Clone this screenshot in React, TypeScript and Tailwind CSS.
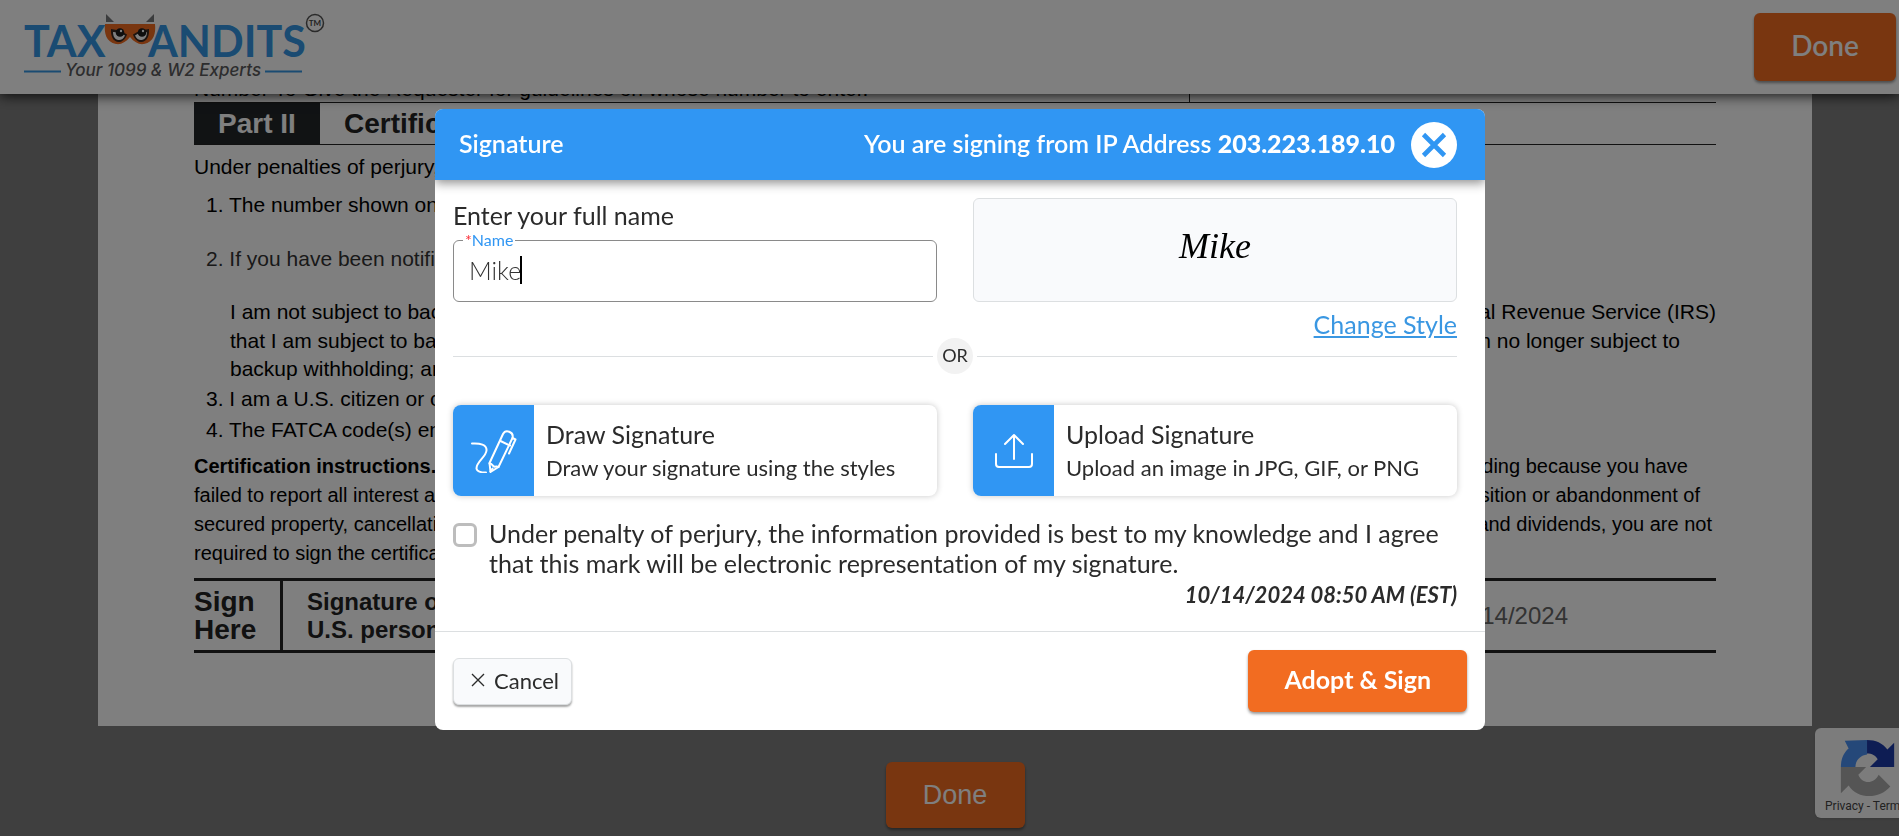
import { useState } from 'react';
import type { ReactNode } from 'react';

function Logo() {
  return (
    <svg viewBox="0 0 310 72" className="h-[72px] w-[310px]" role="img" aria-label="TaxBandits">
      <g fill="#3496e4" fontFamily="Lato, sans-serif" fontWeight="700" fontSize="43">
        <text x="2" y="46">TAX</text>
        <text x="126" y="46">ANDITS</text>
      </g>
      {/* bandit mask */}
      <path d="M84 11V3l8 8zM132 11V3l-8 8z" fill="#77787b" />
      <path
        d="M83 13h50c1 9-1 18-11 20-5 .8-9.500-1.500-14-7-4.500 5.500-9 7.800-14 7-10-2-12-11-11-20z"
        fill="#f26c21"
      />
      <path d="M89 18c6 .5 12 2.500 16 5.500-2 6-6 8-9 7.500-5-.8-7.500-6-7-13zM127 18c-6 .5-12 2.500-16 5.500 2 6 6 8 9 7.500 5-.8 7.500-6 7-13z" fill="#3a2a22" />
      <path d="M91 21c5 0 9 1.500 12 3.500-1.500 3.500-4 4.800-6.500 4.500-3.500-.5-5.500-3.500-5.500-8zM125 21c-5 0-9 1.500-12 3.500 1.500 3.500 4 4.800 6.500 4.500 3.500-.5 5.500-3.500 5.500-8z" fill="#fff" />
      <circle cx="98" cy="21.500" r="4.300" fill="#1c1c1c" />
      <circle cx="120" cy="21.500" r="4.300" fill="#1c1c1c" />
      <circle cx="99" cy="20" r="1.200" fill="#fff" />
      <circle cx="121" cy="20" r="1.200" fill="#fff" />
      <circle cx="293" cy="12" r="8.500" fill="none" stroke="#555" strokeWidth="1.500" />
      <text x="293" y="15" textAnchor="middle" fontFamily="Lato, sans-serif" fontWeight="700" fontSize="8" fill="#444">
        TM
      </text>
      <path d="M2 60.500h37M243 60.500h37" stroke="#3496e4" strokeWidth="2" />
      <text
        x="141"
        y="65"
        textAnchor="middle"
        fontFamily="Inter, sans-serif"
        fontStyle="italic"
        fontWeight="500"
        fontSize="17"
        fill="#5a5a5c"
      >
        Your 1099 &amp; W2 Experts
      </text>
    </svg>
  );
}

function PenIcon() {
  return (
    <svg viewBox="0 0 46 44" className="h-11 w-[46px]" fill="none" stroke="#fff" strokeWidth="2" strokeLinecap="round" strokeLinejoin="round">
      <path d="M1 14.500c8-.5 15 1 14.500 7C15 28 5 33 5.500 39.500c.3 3.500 6 4 9.500 4" />
      <path d="M19.500 43l-1-9L32 5c2.500-5 11-2.500 9.500 4L27.500 38z" />
      <path d="M18.500 34.500c3 0 3 2.500 4.500 3 1.500.5 3-.5 4.500.5M29.500 12l9.500 4.500M41.500 9l3 1.500-6.500 14M19.500 42.500l2-3" />
    </svg>
  );
}

function UploadIcon() {
  return (
    <svg viewBox="0 0 40 36" className="h-9 w-10" fill="none" stroke="#fff" strokeWidth="2" strokeLinecap="round" strokeLinejoin="round">
      <path d="M2 21v10c0 2 1 3 3 3h30c2 0 3-1 3-3V21" />
      <path d="M20 26V2M11 11l9-9 9 9" />
    </svg>
  );
}

function CloseIcon({ className, width }: { className: string; width: number }) {
  return (
    <svg viewBox="0 0 24 24" className={className} fill="none" stroke="currentColor" strokeWidth={width}>
      <path d="M3 3l18 18M21 3L3 21" />
    </svg>
  );
}

function RecaptchaBadge() {
  return (
    <div className="absolute left-[1815px] top-[728px] flex h-[90px] w-64 flex-col rounded-md bg-[#f9f9f9] pt-2 shadow-sm">
      <svg viewBox="0 0 64 64" className="ml-[22px] h-[62px] w-[62px]">
        <path d="M31 4v15c-7 1-12 6-12 13H4C4 24 7 17 12 13L8 5z" fill="#4a90f2" />
        <path d="M31 4c9 0 16 3 21 10l7-7v25H34l8-8c-2-4-6-6-11-6z" fill="#1c3aa9" />
        <path d="M4 32h26l-8 8c4 10 16 10 21 0l12 12C43 66 21 65 12 51l-8 8z" fill="#ababab" />
      </svg>
      <p className="ml-[10px] font-['Roboto'] text-xs leading-4 text-[#444]">Privacy - Terms</p>
    </div>
  );
}

function SplitLine({ left, right, className = '' }: { left: ReactNode; right?: string; className?: string }) {
  return (
    <p className={`flex justify-between whitespace-nowrap ${className}`}>
      <span>{left}</span>
      <span>{right}</span>
    </p>
  );
}

function FormPage() {
  return (
    <section className="h-[632px] overflow-hidden bg-white px-24 font-['Liberation_Sans',sans-serif] text-[21px] leading-7 text-black">
      <div className="-mt-5 flex h-[29px] border-b border-[#222]">
        <p className="w-[996px] border-r border-[#222] leading-[30px]">
          Number To Give the Requester for guidelines on whose number to enter.
        </p>
      </div>
      <div className="flex h-[42px] items-center border-b border-[#222] text-[28px] font-bold">
        <h2 className="flex h-full w-[126px] items-center justify-center bg-[#222629] text-white">Part II</h2>
        <h2 className="ml-6 text-[#222]">Certification</h2>
      </div>
      <p className="mt-2">Under penalties of perjury, I certify that:</p>
      <ol className="pl-9">
        <li className="mt-[10px]">
          <span className="-ml-6">1. </span>The number shown on this form is my correct taxpayer identification number
        </li>
        <li className="mt-[26px] text-[#333]">
          <span className="-ml-6">2. </span>If you have been notified by the IRS
        </li>
        <li className="mt-[25px] list-none">
          <SplitLine left="I am not subject to backup withholding because" right="the Internal Revenue Service (IRS)" />
          <SplitLine left="that I am subject to backup withholding" right="I am no longer subject to" className="mt-px pr-9" />
          <SplitLine left="backup withholding; and" />
        </li>
        <li className="mt-[2px]">
          <span className="-ml-6">3. </span>I am a U.S. citizen or other U.S. person; and
        </li>
        <li className="mt-[3px]">
          <span className="-ml-6">4. </span>The FATCA code(s) entered on this form
        </li>
      </ol>
      <div className="mt-2 text-xl leading-[29px]">
        <SplitLine left={<b>Certification instructions.</b>} right="backup withholding because you have" className="pr-7" />
        <SplitLine left="failed to report all interest and dividends" right="paid, acquisition or abandonment of" className="pr-4" />
        <SplitLine left="secured property, cancellation of debt" right="interest and dividends, you are not" className="pr-1" />
        <SplitLine left="required to sign the certification" />
      </div>
      <div className="mt-[10px] flex h-[75px] items-center border-y-[3px] border-[#222] font-bold leading-7 text-[#222]">
        <p className="flex h-full w-[89px] items-center border-r-[3px] border-[#222] text-[28px] leading-7">
          Sign
          <br />
          Here
        </p>
        <p className="ml-6 text-2xl leading-7">
          Signature of
          <br />
          U.S. person
        </p>
        <p className="ml-auto mr-[148px] text-2xl font-normal text-[#666]">10/14/2024</p>
      </div>
    </section>
  );
}

interface OptionCardProps {
  icon: ReactNode;
  title: string;
  detail: string;
}

function OptionCard({ icon, title, detail }: OptionCardProps) {
  return (
    <button type="button" className="flex h-[91px] overflow-hidden rounded-lg bg-white text-left shadow-[0_0_6px_rgba(0,0,0,0.22)]">
      <span className="flex h-full w-[81px] shrink-0 items-center justify-center bg-[#3096f3]">{icon}</span>
      <span className="flex h-full flex-col justify-center pl-3">
        <span className="text-[25px] leading-[34px]">{title}</span>
        <span className="whitespace-nowrap text-[22px] leading-[34px]">{detail}</span>
      </span>
    </button>
  );
}

function SignatureModal() {
  const [name, setName] = useState('Mike');

  return (
    <div
      role="dialog"
      aria-label="Signature"
      className="w-[1050px] overflow-hidden rounded-lg bg-white font-['Lato',sans-serif] text-[25px] text-[#2b2b2b] [font-variant-ligatures:none]"
    >
      <header className="flex h-[71px] items-center bg-[#3096f3] pl-6 pr-7 font-semibold text-white shadow-[0_3px_10px_rgba(0,0,0,0.45)]">
        <h1 className="pb-0.5">Signature</h1>
        <p className="ml-auto pb-0.5">
          You are signing from IP Address <b className="font-black">203.223.189.10</b>
        </p>
        <button type="button" aria-label="Close" className="ml-4 flex size-[46px] items-center justify-center rounded-full bg-white text-[#3096f3]">
          <CloseIcon className="size-7" width={4} />
        </button>
      </header>

      <div className="pb-[21px] pl-[18px] pr-7 pt-[18px]">
        <div className="grid grid-cols-2 gap-x-9">
          <div>
            <p className="leading-[34px]">Enter your full name</p>
            <div className="relative mt-2">
              <input
                id="name"
                value={name}
                onChange={(e) => setName(e.target.value)}
                className="block h-[62px] w-full rounded-md border border-[#8a8a8a] px-[15px] pb-0.5 font-light text-[#333] outline-none"
              />
              <label htmlFor="name" className="absolute -top-2 left-[10px] bg-white px-0.5 text-base leading-4 text-[#3096f3]">
                <span className="text-red-500">*</span>Name
              </label>
              <span className="absolute left-[67px] top-4 h-7 w-0.5 bg-black" />
            </div>
          </div>
          <div>
            <div className="flex h-[104px] items-center justify-center rounded-md border border-[#dcdfe1] bg-[#f9fafc] pb-2 font-['Liberation_Serif',serif] text-4xl italic text-black">
              {name}
            </div>
            <p className="mt-2 text-right leading-7">
              <a href="#style" className="text-[#3a97e2] underline">
                Change Style
              </a>
            </p>
          </div>
        </div>

        <div className="flex items-center gap-1">
          <span className="h-px flex-1 bg-[#dcdfe1]" />
          <span className="flex size-9 items-center justify-center rounded-full bg-[#f2f2f2] pb-0.5 text-lg">OR</span>
          <span className="h-px flex-1 bg-[#dcdfe1]" />
        </div>

        <div className="mt-[31px] grid grid-cols-2 gap-x-9">
          <OptionCard icon={<PenIcon />} title="Draw Signature" detail="Draw your signature using the styles" />
          <OptionCard icon={<UploadIcon />} title="Upload Signature" detail="Upload an image in JPG, GIF, or PNG" />
        </div>

        <div className="mt-[22px] flex items-start">
          <input
            id="agree"
            type="checkbox"
            className="mt-[5px] size-6 shrink-0 appearance-none rounded-md border-[3px] border-[#bdbdbd]"
          />
          <label htmlFor="agree" className="ml-3 whitespace-nowrap leading-[30px]">
            Under penalty of perjury, the information provided is best to my knowledge and I agree
            <br />
            that this mark will be electronic representation of my signature.
          </label>
        </div>
        <p className="mt-0.5 text-right text-[22px] font-bold italic leading-[30px]">10/14/2024 08:50 AM (EST)</p>
      </div>

      <footer className="flex items-center justify-between border-t border-[#dcdfe1] p-[18px]">
        <button
          type="button"
          className="flex h-[47px] items-center gap-2 rounded-md border border-[#dcdfe1] bg-[#f9fafc] pb-0.5 pl-4 pr-3 text-[22px] shadow-[0_2px_2px_rgba(0,0,0,0.35)]"
        >
          <CloseIcon className="size-4" width={2} />
          Cancel
        </button>
        <button
          type="button"
          className="h-[62px] rounded-md bg-[#f26c21] px-9 pb-0.5 text-[25px] font-bold text-white shadow-[0_2px_3px_rgba(0,0,0,0.4)]"
        >
          Adopt &amp; Sign
        </button>
      </footer>
    </div>
  );
}

export default function App() {
  return (
    <div className="relative h-screen overflow-hidden bg-[#7f7f7f]">
      <header className="relative z-10 flex h-[94px] items-center justify-between bg-white pl-[22px] pr-[3px] shadow-[0_2px_12px_rgba(0,0,0,0.8)]">
        <Logo />
        <button
          type="button"
          className="h-[68px] w-[142px] rounded-md bg-[#f26c21] pb-1 font-['Lato',sans-serif] text-[28px] font-semibold text-white shadow-[0_2px_3px_rgba(0,0,0,0.4)]"
        >
          Done
        </button>
      </header>

      <main className="pl-[98px] pr-[87px]">
        <FormPage />
        <div className="mt-9 flex justify-center">
          <button
            type="button"
            className="h-[66px] w-[139px] rounded-md bg-[#f26c21] font-['Liberation_Sans',sans-serif] text-[27px] text-white shadow-[0_2px_3px_rgba(0,0,0,0.4)]"
          >
            Done
          </button>
        </div>
      </main>

      <RecaptchaBadge />

      <div className="fixed inset-0 z-20 flex items-start justify-center bg-black/50 pl-[21px] pt-[109px]">
        <SignatureModal />
      </div>
    </div>
  );
}
